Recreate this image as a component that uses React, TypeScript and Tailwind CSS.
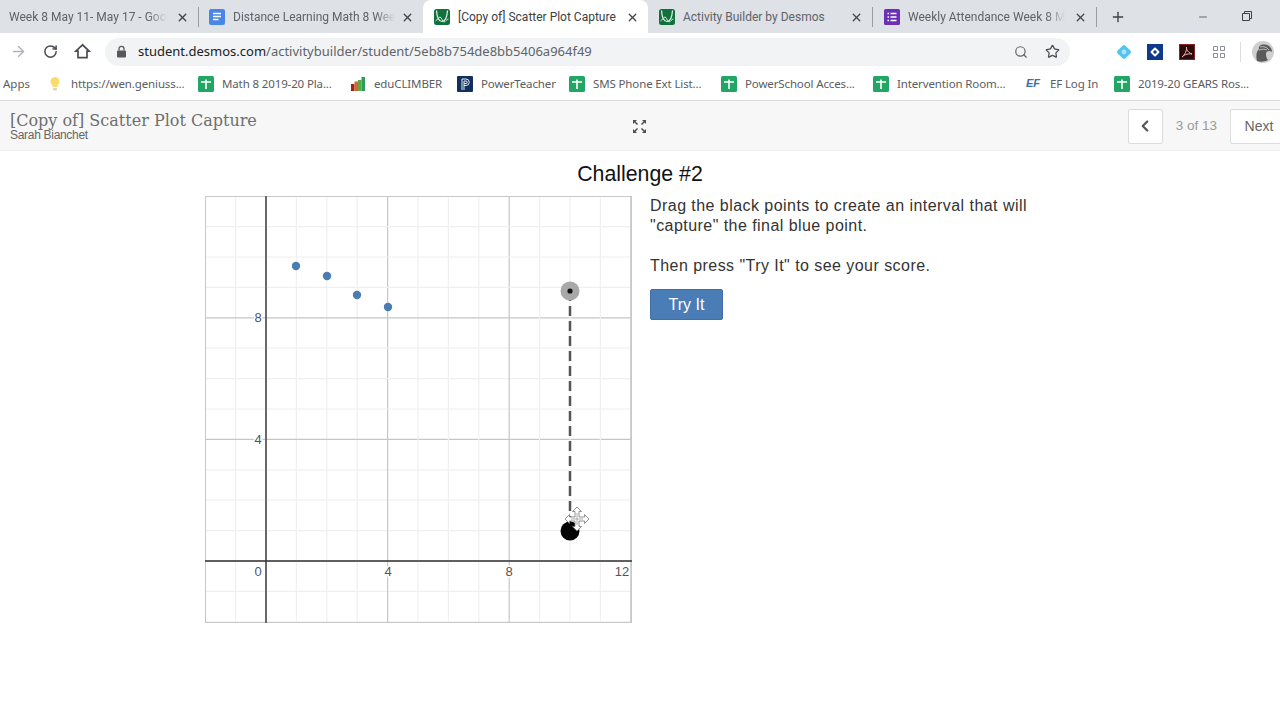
import { ArrowRight, RotateCw, Search, Star, X, Plus, Minus, ChevronLeft } from 'lucide-react'

const SANS = "font-['Noto_Sans',sans-serif]"

function DesmosIcon() {
  return (
    <svg width="16" height="16" viewBox="0 0 16 16" className="shrink-0">
      <rect width="16" height="16" rx="2.500" fill="#12703c" />
      <path d="M2.500 1.500c.5 7 2.500 11 5.500 11s5-4 5.500-11" fill="none" stroke="#e8f5ec" strokeWidth="1.200" />
      <path d="M1.500 12c2-1 3-4 4.500-4s2.500 5 4 5 2.500-3 4.500-3" fill="none" stroke="#cfe9d8" strokeWidth="1" />
    </svg>
  )
}

function DocsIcon() {
  return (
    <svg width="16" height="16" viewBox="0 0 16 16" className="shrink-0">
      <rect width="16" height="16" rx="2" fill="#4a86e8" />
      <path d="M4 4.500h8M4 7.500h8M4 10.500h5.500" stroke="#fff" strokeWidth="1.400" />
    </svg>
  )
}

function FormsIcon() {
  return (
    <svg width="16" height="16" viewBox="0 0 16 16" className="shrink-0">
      <rect width="16" height="16" rx="1.500" fill="#6a2fb5" />
      <path d="M3.500 4.500h1.500M3.500 8h1.500M3.500 11.500h1.500M6.500 4.500h6M6.500 8h6M6.500 11.500h6" stroke="#fff" strokeWidth="1.400" />
    </svg>
  )
}

function SheetIcon() {
  return (
    <svg width="16" height="16" viewBox="0 0 16 16" className="shrink-0">
      <rect width="16" height="16" rx="1.500" fill="#23a566" />
      <path d="M3 6h10M8 3.500V13" stroke="#fff" strokeWidth="1.600" />
    </svg>
  )
}

function BulbIcon() {
  return (
    <svg width="16" height="16" viewBox="0 0 16 16" className="shrink-0">
      <path d="M8 1a4.500 4.500 0 0 0-2.500 8.200V11h5V9.200A4.500 4.500 0 0 0 8 1z" fill="#fbdc6a" />
      <rect x="6" y="12" width="4" height="2.500" rx="1" fill="#d8d4c4" />
    </svg>
  )
}

function ChartIcon() {
  return (
    <svg width="16" height="16" viewBox="0 0 16 16" className="shrink-0">
      <rect x="1" y="8" width="3.500" height="7" fill="#9c2420" />
      <rect x="4.500" y="5.500" width="3.500" height="9.500" fill="#d8662c" />
      <rect x="8" y="4" width="3.500" height="11" fill="#5aa84a" />
      <rect x="11.500" y="1" width="3.500" height="14" fill="#2f9a5a" />
    </svg>
  )
}

function PowerIcon() {
  return (
    <svg width="16" height="16" viewBox="0 0 16 16" className="shrink-0">
      <rect width="16" height="16" rx="1" fill="#11305f" />
      <path d="M5 14V3h4a3 3 0 0 1 0 6.500H7M7 14V5h2a1 1 0 0 1 0 2.500H7" fill="none" stroke="#fff" strokeWidth="0.900" />
    </svg>
  )
}

function EfIcon() {
  return <span className="w-[16px] shrink-0 text-[11px] font-bold italic text-[#3d6fa5] font-['Liberation_Sans',sans-serif]">EF</span>
}

function Tab({ icon, title, width, fade, active, pad }: { icon?: React.ReactNode; title: string; width: string; fade?: boolean; active?: boolean; pad: string }) {
  return (
    <div className={`${width} ${pad} relative flex h-[33px] shrink-0 items-center ${active ? 'rounded-t-lg bg-white text-[#3c4043]' : 'text-[#5f6368]'}`}>
      {icon}
      <span className={`whitespace-nowrap font-['Roboto',sans-serif] text-[12px] ${icon ? 'ml-[8px]' : ''} ${fade ? '[mask-image:linear-gradient(to_right,black_88%,transparent)]' : ''}`}>{title}</span>
      <X size={13} strokeWidth={2.500} className="absolute right-[9px] top-[11px] text-[#45484c]" />
    </div>
  )
}

function Sep() {
  return <div className="h-[20px] w-px shrink-0 bg-[#9a9ca0]" />
}

function Bookmark({ icon, label, width }: { icon: React.ReactNode; label: string; width: string }) {
  return (
    <div className={`${width} flex shrink-0 items-center gap-[8px]`}>
      {icon}
      <span className="whitespace-nowrap text-[11.500px] tracking-[-0.13px] text-[#5a5d61]">{label}</span>
    </div>
  )
}

function Graph() {
  const unit = 30.4
  const ox = 61
  const oy = 365
  const ticks = [-2, -1, 0, 1, 2, 3, 4, 5, 6, 7, 8, 9, 10, 11, 12, 13, 14]
  const points = [
    [91, 70],
    [122, 80],
    [152, 99],
    [183, 111],
  ]
  const labels = [
    { x: 53, y: 126, t: '8' },
    { x: 53, y: 248, t: '4' },
    { x: 53, y: 380, t: '0' },
    { x: 183, y: 380, t: '4' },
    { x: 304, y: 380, t: '8' },
    { x: 417, y: 380, t: '12' },
  ]
  return (
    <svg width="427" height="427" viewBox="0 0 427 427" className="shrink-0">
      <rect x="0.500" y="0.500" width="426" height="426" fill="#fff" />
      {ticks.map((k) => (
        <g key={k}>
          <line x1={ox + k * unit} x2={ox + k * unit} y1="0" y2="427" stroke={k % 4 === 0 ? '#c6c6c6' : '#f0f0f0'} strokeWidth="1.200" />
          <line y1={oy - k * unit} y2={oy - k * unit} x1="0" x2="427" stroke={k % 4 === 0 ? '#c6c6c6' : '#f0f0f0'} strokeWidth="1.200" />
        </g>
      ))}
      <rect x="0.500" y="0.500" width="426" height="426" fill="none" stroke="#c8c8c8" />
      <line x1={ox} x2={ox} y1="0" y2="427" stroke="#555" strokeWidth="1.700" />
      <line x1="0" x2="427" y1={oy} y2={oy} stroke="#333" strokeWidth="1.500" />
      {labels.map((l, i) => (
        <text key={i} x={l.x} y={l.y} textAnchor="middle" fontSize="13" fontFamily="'Liberation Sans', sans-serif" fill="#555" stroke="#fff" strokeWidth="3" paintOrder="stroke">
          {l.t}
        </text>
      ))}
      {points.map((p, i) => (
        <circle key={i} cx={p[0]} cy={p[1]} r="4.200" fill="#4a7cb3" />
      ))}
      <line x1="365" x2="365" y1="95" y2="335" stroke="#555" strokeWidth="2.500" strokeDasharray="10 5" />
      <circle cx="365" cy="95" r="9.500" fill="#a8a8a8" />
      <circle cx="365" cy="95" r="2.600" fill="#111" />
      <circle cx="365" cy="335" r="9.500" fill="#050505" />
      <path
        d="M372 311l4.500 4.500h-2.500v5.500h5.500v-2.500l4.500 4.500-4.500 4.500v-2.500h-5.500v5.500h2.500l-4.500 4.500-4.500-4.500h2.500v-5.500h-5.500v2.500l-4.500-4.500 4.500-4.500v2.500h5.500v-5.500h-2.500z"
        fill="#fff"
        stroke="#777"
        strokeWidth="0.800"
      />
      <path d="M372 317v12M366 323h12" stroke="#999" strokeWidth="0.800" />
    </svg>
  )
}

export default function App() {
  return (
    <div className={`h-[720px] w-[1280px] overflow-hidden bg-white ${SANS}`}>
      {/* tab strip */}
      <div className="flex h-[33px] items-center bg-[#dee1e6]">
        <Tab fade title="Week 8 May 11- May 17 - Goo" width="w-[198px]" pad="pl-[9px]" />
        <Sep />
        <Tab fade icon={<DocsIcon />} title="Distance Learning Math 8 Wee" width="w-[224px]" pad="pl-[10px]" />
        <Tab active icon={<DesmosIcon />} title="[Copy of] Scatter Plot Capture" width="w-[225px]" pad="pl-[11px]" />
        <Tab icon={<DesmosIcon />} title="Activity Builder by Desmos" width="w-[224px]" pad="pl-[11px]" />
        <Sep />
        <Tab fade icon={<FormsIcon />} title="Weekly Attendance Week 8 M" width="w-[223px]" pad="pl-[11px]" />
        <Sep />
        <Plus size={16} strokeWidth={2} className="ml-[13px] text-[#3c4043]" />
        <Minus size={12} strokeWidth={1.500} className="ml-[71px] text-[#3c4043]" />
        <svg width="10" height="10" viewBox="0 0 10 10" className="ml-[33px] mb-[2px]">
          <path d="M2.500 2.500V.5h7v7h-2M.5 2.500h7v7h-7z" fill="none" stroke="#3c4043" />
        </svg>
      </div>

      {/* toolbar */}
      <div className="flex h-[37px] items-center bg-white">
        <ArrowRight size={17} strokeWidth={2} className="ml-[10px] text-[#b0b3b7]" />
        <RotateCw size={15} strokeWidth={2.400} className="ml-[16px] text-[#4a4d51]" />
        <svg width="17" height="17" viewBox="0 0 17 17" className="ml-[16px]">
          <path d="M8.500 1.800L1.800 8.200h2.200v6.500h9V8.200h2.200z" fill="none" stroke="#4a4d51" strokeWidth="1.700" strokeLinejoin="miter" />
        </svg>
        <div className="ml-[14px] flex h-[28px] w-[965px] items-center rounded-full bg-[#f1f3f4] pl-[11px]">
          <svg width="11" height="13" viewBox="0 0 11 13">
            <path d="M3 5.500V3.800a2.500 2.500 0 0 1 5 0v1.700" fill="none" stroke="#55585c" strokeWidth="1.300" />
            <rect x="1" y="5.500" width="9" height="7" rx="1" fill="#55585c" />
          </svg>
          <span className="ml-[11px] text-[13px] text-[#5f6368]">
            <span className="text-[#202124]">student.desmos.com</span>/activitybuilder/student/5eb8b754de8bb5406a964f49
          </span>
          <Search size={14} strokeWidth={2} className="ml-auto text-[#5f6368]" />
          <Star size={15} strokeWidth={2} className="ml-[17px] mr-[10px] text-[#4a4d51]" />
        </div>
        <svg width="16" height="16" viewBox="0 0 16 16" className="ml-[46px]">
          <rect x="2.500" y="2.500" width="11" height="11" rx="2" transform="rotate(45 8 8)" fill="#52c4ee" />
          <circle cx="8" cy="8" r="2.400" fill="#a9e4f8" />
        </svg>
        <svg width="16" height="16" viewBox="0 0 16 16" className="ml-[15px]">
          <rect width="16" height="16" fill="#0d3a8c" />
          <path d="M8 4.500L11.500 8 8 11.500 4.500 8z" fill="none" stroke="#fff" strokeWidth="2" strokeLinejoin="round" />
        </svg>
        <svg width="16" height="16" viewBox="0 0 16 16" className="ml-[16px]">
          <rect x="0.500" y="0.500" width="15" height="15" fill="#2a0a0a" stroke="#8e1f1f" />
          <path d="M3 13c3-2 5-7 4.500-10C7 6 10 9 13 10c-3-.5-7 0-10 3z" fill="none" stroke="#f2b5b0" strokeWidth="1" />
        </svg>
        <svg width="14" height="14" viewBox="0 0 14 14" className="ml-[17px]">
          <path d="M1.500 1.500h4v4h-4zM8.500 1.500h4v4h-4zM1.500 8.500h4v4h-4zM8.500 8.500h4v4h-4z" fill="none" stroke="#8a8d91" />
        </svg>
        <div className="ml-[14px] h-[20px] w-px bg-[#dadce0]" />
        <svg width="22" height="22" viewBox="0 0 22 22" className="ml-[11px]">
          <circle cx="11" cy="11" r="11" fill="#cfcfcf" />
          <path d="M5 20c-1-5-1-9 2-12-1-3 2-5 6-4.500 4 .5 7 3.500 7 7.500-3-2-6-1-6 2 0 3 1 5 2 6-3 2-8 2-11 1z" fill="#5a5a5a" />
          <path d="M8 6c3-1 7 0 9 3M7 9c3-1 6-1 8 0" fill="none" stroke="#d8d8d8" strokeWidth="0.800" />
        </svg>
      </div>

      {/* bookmarks */}
      <div className="flex h-[31px] items-center border-b border-[#dadce0] bg-white pb-[3px] pl-[3px]">
        <span className="w-[44px] shrink-0 text-[11.500px] text-[#5a5d61]">Apps</span>
        <Bookmark width="w-[151px]" icon={<BulbIcon />} label="https://wen.geniuss..." />
        <Bookmark width="w-[152px]" icon={<SheetIcon />} label="Math 8 2019-20 Pla..." />
        <Bookmark width="w-[107px]" icon={<ChartIcon />} label="eduCLIMBER" />
        <Bookmark width="w-[112px]" icon={<PowerIcon />} label="PowerTeacher" />
        <Bookmark width="w-[152px]" icon={<SheetIcon />} label="SMS Phone Ext List..." />
        <Bookmark width="w-[152px]" icon={<SheetIcon />} label="PowerSchool Acces..." />
        <Bookmark width="w-[153px]" icon={<SheetIcon />} label="Intervention Room..." />
        <Bookmark width="w-[88px]" icon={<EfIcon />} label="EF Log In" />
        <Bookmark width="w-[140px]" icon={<SheetIcon />} label="2019-20 GEARS Ros..." />
      </div>

      {/* activity header */}
      <div className="grid h-[50px] grid-cols-3 items-center border-b border-[#efefef] bg-[#f7f7f7] pt-[1px]">
        <div className="pl-[10px]">
          <div className="font-['DejaVu_Serif',serif] text-[16px] leading-[17px] text-[#6e6e6e]">[Copy of] Scatter Plot Capture</div>
          <div className="font-['Liberation_Sans',sans-serif] text-[12px] leading-[12px] tracking-[-0.3px] text-[#666]">Sarah Bianchet</div>
        </div>
        <div className="flex justify-center">
          <svg width="15" height="15" viewBox="0 0 15 15">
            <path d="M1 1h4L1 5zM14 1v4l-4-4zM1 14v-4l4 4zM14 14h-4l4-4z" fill="#4f4f4f" />
            <path d="M2.500 2.500l3 3M12.500 2.500l-3 3M2.500 12.500l3-3M12.500 12.500l-3-3" stroke="#4f4f4f" strokeWidth="1.500" />
          </svg>
        </div>
        <div className="flex items-center justify-end font-['Liberation_Sans',sans-serif]">
          <button className="flex h-[35px] w-[35px] items-center justify-center rounded-[2px] border border-[#dcdcdc] bg-white text-[#555]">
            <ChevronLeft size={18} strokeWidth={3} />
          </button>
          <span className="ml-[13px] mr-[13px] text-[13.500px] text-[#9a9a9a]">3 of 13</span>
          <button className="-mr-[10px] h-[35px] w-[60px] rounded-[2px] border border-[#dcdcdc] bg-white pl-[4px] pr-[6px] text-[14px] text-[#666]">Next</button>
        </div>
      </div>

      {/* challenge */}
      <div className="font-['Liberation_Sans',sans-serif]">
        <h1 className="pt-[11px] text-center text-[21.300px] leading-[24px] text-[#111]">Challenge #2</h1>
        <div className="ml-[205px] mt-[10px] flex gap-[18px]">
          <Graph />
          <div className="w-[400px] text-[16px] leading-[20px] tracking-[0.45px] text-[#333]">
            <p>Drag the black points to create an interval that will "capture" the final blue point.</p>
            <p className="mt-[20px]">Then press "Try It" to see your score.</p>
            <button className="mt-[13px] h-[31px] w-[73px] rounded-[2px] border border-[#3f6fa6] bg-[#4a7cb5] text-[16px] tracking-normal text-white">Try It</button>
          </div>
        </div>
      </div>
    </div>
  )
}
